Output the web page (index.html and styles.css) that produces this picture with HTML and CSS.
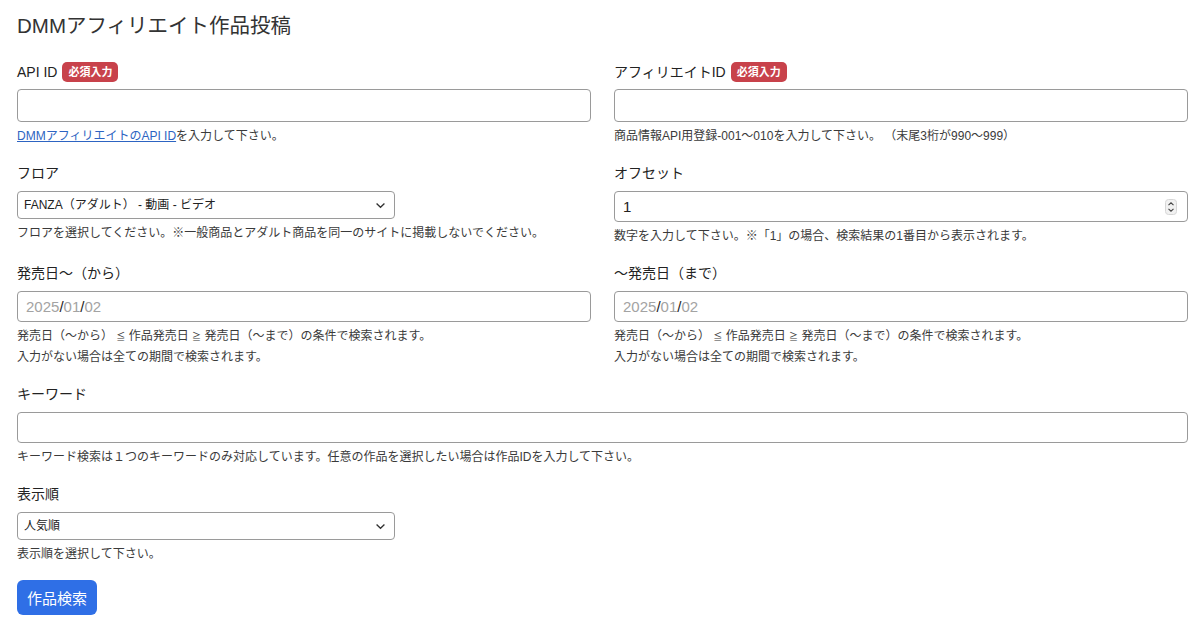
FILE: index.html
```html
<!DOCTYPE html>
<html lang="ja">
<head>
<meta charset="utf-8">
<title>DMMアフィリエイト作品投稿</title>
<link rel="stylesheet" href="styles.css">
</head>
<body>
<div class="page">
  <h1 class="title">DMMアフィリエイト作品投稿</h1>
  <form class="form">
    <div class="grid">
      <div class="field">
        <label class="label label-req">API ID <span class="badge">必須入力</span></label>
        <input class="control control-text" type="text">
        <div class="help"><a class="link" href="#">DMMアフィリエイトのAPI ID</a>を入力して下さい。</div>
      </div>
      <div class="field">
        <label class="label label-req">アフィリエイトID <span class="badge">必須入力</span></label>
        <input class="control control-text" type="text">
        <div class="help">商品情報API用登録-001〜010を入力して下さい。 （末尾3桁が990〜999）</div>
      </div>

      <div class="field">
        <label class="label">フロア</label>
        <select class="select"><option>FANZA（アダルト） - 動画 - ビデオ</option></select>
        <div class="help">フロアを選択してください。※一般商品とアダルト商品を同一のサイトに掲載しないでください。</div>
      </div>
      <div class="field">
        <label class="label">オフセット</label>
        <div class="control control-num">
          <input class="num-input" type="text" value="1">
          <svg class="spinner" width="12" height="16" viewBox="0 0 12 16">
            <rect x="0.5" y="0.5" width="11" height="15" rx="3" fill="#f1f1f1" stroke="#d6d6d6"/>
            <path d="M3.5 6.2 L6 3.8 L8.5 6.2" fill="none" stroke="#444" stroke-width="1.1"/>
            <path d="M3.5 9.8 L6 12.2 L8.5 9.8" fill="none" stroke="#444" stroke-width="1.1"/>
          </svg>
        </div>
        <div class="help">数字を入力して下さい。※「1」の場合、検索結果の1番目から表示されます。</div>
      </div>

      <div class="field">
        <label class="label">発売日〜（から）</label>
        <div class="control control-date"><span class="dim">2025</span>/<span class="dim">01</span>/<span class="dim">02</span></div>
        <div class="help">発売日（〜から） <span class="rel">≦</span> 作品発売日 <span class="rel">≧</span> 発売日（〜まで）の条件で検索されます。<br>入力がない場合は全ての期間で検索されます。</div>
      </div>
      <div class="field">
        <label class="label">〜発売日（まで）</label>
        <div class="control control-date"><span class="dim">2025</span>/<span class="dim">01</span>/<span class="dim">02</span></div>
        <div class="help">発売日（〜から） <span class="rel">≦</span> 作品発売日 <span class="rel">≧</span> 発売日（〜まで）の条件で検索されます。<br>入力がない場合は全ての期間で検索されます。</div>
      </div>

      <div class="field field-wide">
        <label class="label">キーワード</label>
        <input class="control control-kw" type="text">
        <div class="help">キーワード検索は１つのキーワードのみ対応しています。任意の作品を選択したい場合は作品IDを入力して下さい。</div>
      </div>

      <div class="field field-wide">
        <label class="label">表示順</label>
        <select class="select"><option>人気順</option></select>
        <div class="help">表示順を選択して下さい。</div>
      </div>
    </div>
    <button class="btn" type="button">作品検索</button>
  </form>
</div>
</body>
</html>
```

FILE: styles.css
```css
* { box-sizing: border-box; }

html, body {
  margin: 0;
  padding: 0;
  background: #ffffff;
}

body {
  font-family: "Liberation Sans", "Noto Sans CJK JP", sans-serif;
  color: #222222;
}

.page {
  padding: 12px 12px 0 17px;
}

.title {
  margin: 0 0 22px;
  font-size: 20.5px;
  line-height: 28px;
  font-weight: normal;
  color: #333333;
}

.grid {
  display: grid;
  grid-template-columns: 1fr 1fr;
  column-gap: 23px;
  row-gap: 17px;
}

.field {
  display: flex;
  flex-direction: column;
  align-items: flex-start;
}

.field-wide {
  grid-column: 1 / 3;
}

.label {
  display: flex;
  align-items: center;
  font-size: 14px;
  line-height: 20px;
  height: 20px;
  margin-bottom: 8px;
  color: #222222;
}

.label-req {
  margin-bottom: 7px;
}

.badge {
  display: inline-flex;
  align-items: center;
  height: 20px;
  margin-left: 5px;
  padding: 0 6px;
  border-radius: 5px;
  background: #c8424b;
  color: #ffffff;
  font-size: 11px;
  font-weight: bold;
}

.control {
  width: 100%;
  border: 1px solid #9a9a9a;
  border-radius: 4px;
  background: #ffffff;
  font-family: inherit;
  font-size: 15px;
  color: #222222;
  padding: 0 8px;
  outline: none;
}

.control-text { height: 33px; }
.control-kw { height: 31px; }

.control-num {
  display: flex;
  align-items: center;
  height: 31px;
  padding-right: 10px;
}

.num-input {
  flex: 1;
  border: 0;
  outline: none;
  padding: 0;
  font-family: inherit;
  font-size: 15px;
  color: #222222;
  background: transparent;
}

.spinner {
  display: block;
  flex: none;
}

.control-date {
  display: flex;
  align-items: center;
  height: 31px;
  color: #222222;
}

.dim { color: #a3a3a3; }

.select {
  appearance: none;
  -webkit-appearance: none;
  width: 378px;
  height: 28px;
  border: 1px solid #9a9a9a;
  border-radius: 4px;
  padding: 0 30px 0 6px;
  font-family: inherit;
  font-size: 12px;
  color: #222222;
  background-color: #ffffff;
  background-image: url("data:image/svg+xml,%3Csvg xmlns='http://www.w3.org/2000/svg' width='12' height='8' viewBox='0 0 12 8'%3E%3Cpath d='M1.5 1.8 L6 6 L10.5 1.8' fill='none' stroke='%23333' stroke-width='1.5'/%3E%3C/svg%3E");
  background-repeat: no-repeat;
  background-position: right 8px center;
  background-size: 11px 7px;
  outline: none;
}

.help {
  margin-top: 4px;
  font-size: 12px;
  line-height: 20px;
  color: #3a3a3a;
}

.rel {
  font-size: 9px;
}

.link {
  color: #2d64c2;
  text-decoration: underline;
}

.btn {
  margin-top: 16px;
  height: 35px;
  padding: 0 10px;
  border: 0;
  border-radius: 6px;
  background: #2f6fe6;
  color: #ffffff;
  font-family: inherit;
  font-size: 15px;
  cursor: pointer;
}
```
